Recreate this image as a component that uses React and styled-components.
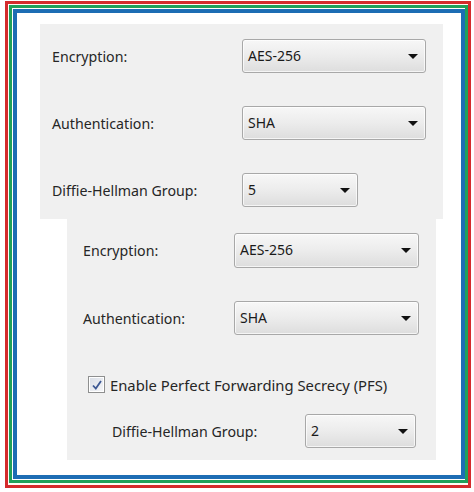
import React from 'react';
import styled, { createGlobalStyle } from 'styled-components';

const GlobalStyle = createGlobalStyle`
  * {
    box-sizing: border-box;
  }
  body {
    margin: 0;
    background: #ffffff;
    font-family: 'Noto Sans', 'Open Sans', sans-serif;
  }
`;

const RedFrame = styled.div`
  margin: 1px 0 0 5px;
  width: 466px;
  height: 487px;
  border: 3px solid #d42b2c;
  padding: 1px 0 2px 1px;
  display: flex;
  background: #fffdf6;
`;

const GreenFrame = styled.div`
  flex: 1;
  display: flex;
  border: 3px solid #1fa05a;
  padding: 1px 0 1px 1px;
  background: #ffffff;
`;

const BlueFrame = styled.div`
  flex: 1;
  display: flex;
  flex-direction: column;
  border: 4px solid #1d6db4;
  padding: 11px 0 0 23px;
  background: #ffffff;
`;

const Panel = styled.div`
  background: #f0f0f0;
  display: flex;
  flex-direction: column;
  width: ${(p) => p.$width}px;
  margin-left: ${(p) => p.$offset || 0}px;
  padding: ${(p) => p.$pad};
`;

const Row = styled.div`
  display: flex;
  align-items: center;
  height: 34px;
  margin-top: ${(p) => p.$gap || 0}px;
  padding-left: ${(p) => p.$indent || 0}px;
`;

const Label = styled.div`
  width: ${(p) => p.$width}px;
  flex-shrink: 0;
  font-size: 14.2px;
  color: #262626;
  white-space: nowrap;
`;

const Select = styled.div`
  display: flex;
  align-items: center;
  justify-content: space-between;
  width: ${(p) => p.$width}px;
  height: ${(p) => p.$height || 34}px;
  padding: 0 7px 2px 5px;
  border: 1px solid #a8a8a8;
  border-radius: 3px;
  background: linear-gradient(#f7f7f7 0%, #ececec 50%, #dddddd 100%);
  box-shadow: inset 0 0 0 1px rgba(255, 255, 255, 0.7);
  font-size: 14px;
  color: #1a1a1a;
`;

const Arrow = styled.span`
  width: 0;
  height: 0;
  margin-top: 2px;
  border-left: 5px solid transparent;
  border-right: 5px solid transparent;
  border-top: 5px solid #111111;
`;

const CheckRow = styled.label`
  display: flex;
  align-items: center;
  gap: 5px;
  margin-top: 41px;
  padding-left: 5px;
  height: 17px;
  font-size: 14.8px;
  color: #262626;
  white-space: nowrap;
`;

const CheckBox = styled.span`
  display: flex;
  align-items: center;
  justify-content: center;
  width: 17px;
  height: 17px;
  border: 1px solid #8e8f8f;
  background: linear-gradient(135deg, #d8dde6, #f6f7f9);
  box-shadow: inset 0 0 0 1px #ffffff;
`;

function Dropdown({ value, width, height }) {
  return (
    <Select $width={width} $height={height}>
      <span>{value}</span>
      <Arrow />
    </Select>
  );
}

export default function App() {
  return (
    <>
      <GlobalStyle />
      <RedFrame>
        <GreenFrame>
          <BlueFrame>
            <Panel $width={403} $pad="15px 0 12px 12px">
              <Row>
                <Label $width={190}>Encryption:</Label>
                <Dropdown value="AES-256" width={184} />
              </Row>
              <Row $gap={33}>
                <Label $width={190}>Authentication:</Label>
                <Dropdown value="SHA" width={184} />
              </Row>
              <Row $gap={33}>
                <Label $width={190}>Diffie-Hellman Group:</Label>
                <Dropdown value="5" width={116} />
              </Row>
            </Panel>
            <Panel $width={369} $offset={27} $pad="14px 0 12px 16px">
              <Row>
                <Label $width={151}>Encryption:</Label>
                <Dropdown value="AES-256" width={185} height={35} />
              </Row>
              <Row $gap={34}>
                <Label $width={151}>Authentication:</Label>
                <Dropdown value="SHA" width={185} />
              </Row>
              <CheckRow>
                <CheckBox>
                  <svg width="12" height="12" viewBox="0 0 12 12">
                    <path
                      d="M2 6.5 L4.8 9.5 L10 2"
                      fill="none"
                      stroke="#3c5894"
                      strokeWidth="1.8"
                    />
                  </svg>
                </CheckBox>
                Enable Perfect Forwarding Secrecy (PFS)
              </CheckRow>
              <Row $gap={21} $indent={29}>
                <Label $width={193}>Diffie-Hellman Group:</Label>
                <Dropdown value="2" width={111} />
              </Row>
            </Panel>
          </BlueFrame>
        </GreenFrame>
      </RedFrame>
    </>
  );
}
